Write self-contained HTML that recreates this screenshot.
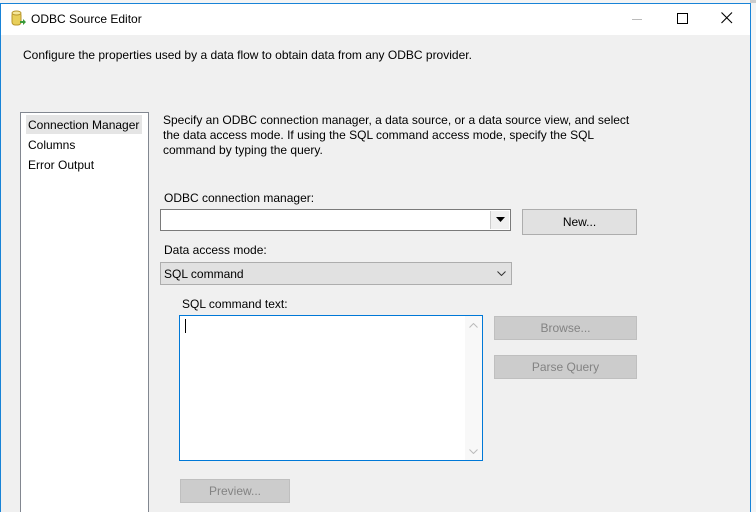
<!DOCTYPE html>
<html style="width:756px;height:512px;overflow:hidden"><head><style>
body{margin:0;width:756px;height:512px;overflow:hidden;background:#f4f4f4;font-family:"Liberation Sans",sans-serif;font-size:12px;color:#000;position:relative}
.a{position:absolute}
.win{left:0;top:3px;width:749px;height:509px;border:1px solid #1883d7;border-bottom:none;background:#f0f0f0;overflow:hidden}
.title{left:0;top:0;width:749px;height:31px;background:#fff}
.btn{background:#e1e1e1;border:1px solid #adadad;box-sizing:border-box;text-align:center;line-height:23px}
.dis{background:#cccccc;border:1px solid #bfbfbf;color:#838383}
</style></head><body>
<div class="a" style="left:750px;top:0;width:6px;height:3px;background:#ccc"></div>
<div class="a win">
 <div class="a title">
  <svg class="a" style="left:10px;top:6px" width="16" height="18"><rect x="1" y="2" width="9" height="13" rx="3" fill="#e8cf5a" stroke="#b8962a"/><ellipse cx="5.5" cy="3" rx="4.5" ry="2" fill="#f5e79a" stroke="#b8962a"/><path d="M9 11h3v-2l3 3-3 3v-2H9z" fill="#3a9a3a"/></svg>
  <div class="a" style="left:30px;top:8px;font-size:12px">ODBC Source Editor</div>
  <div class="a" style="left:631px;top:15px;width:10px;height:1px;background:#bbb"></div>
  <div class="a" style="left:676px;top:9px;width:9px;height:9px;border:1px solid #000"></div>
  <svg class="a" style="left:720px;top:8px" width="12" height="12"><path d="M0.5 0.5L11 11M11 0.5L0.5 11" stroke="#000" stroke-width="1.1"/></svg>
 </div>
 <div class="a" style="left:22px;top:44px">Configure the properties used by a data flow to obtain data from any ODBC provider.</div>
 <div class="a" style="left:19px;top:108px;width:127px;height:420px;background:#fff;border:1px solid #828790">
  <div class="a" style="left:5px;top:2px;width:116px;height:19px;background:#e5e5e5"></div>
  <div class="a" style="left:7px;top:5px">Connection Manager</div>
  <div class="a" style="left:7px;top:25px">Columns</div>
  <div class="a" style="left:7px;top:45px">Error Output</div>
 </div>
 <div class="a" style="left:162px;top:109px;line-height:15px;width:470px">Specify an ODBC connection manager, a data source, or a data source view, and select the data access mode. If using the SQL command access mode, specify the SQL command by typing the query.</div>
 <div class="a" style="left:163px;top:187px">ODBC connection manager:</div>
 <div class="a" style="left:159px;top:205px;width:349px;height:20px;background:#fff;border:1px solid #7a7a7a">
  <div class="a" style="right:1px;top:1px;width:18px;height:18px;background:#f0f0f0;border-left:1px solid #ccc"></div>
  <svg class="a" style="right:5px;top:7px" width="9" height="5"><path d="M0 0h9L4.5 5z"/></svg>
 </div>
 <div class="a btn" style="left:521px;top:205px;width:115px;height:26px;line-height:24px">New...</div>
 <div class="a" style="left:163px;top:239px">Data access mode:</div>
 <div class="a" style="left:159px;top:258px;width:350px;height:21px;background:#e1e1e1;border:1px solid #adadad">
  <div class="a" style="left:3px;top:4px">SQL command</div>
  <svg class="a" style="right:5px;top:8px" width="9" height="5"><path d="M0.5 0.5L4.5 4.5L8.5 0.5" stroke="#333" fill="none"/></svg>
 </div>
 <div class="a" style="left:181px;top:293px">SQL command text:</div>
 <div class="a" style="left:178px;top:311px;width:302px;height:144px;background:#fff;border:1px solid #0078d7">
  <div class="a" style="left:5px;top:3px;width:1px;height:14px;background:#000"></div>
  <div class="a" style="right:0;top:0;width:17px;height:144px;background:#f8f8f8"></div>
  <svg class="a" style="right:4px;top:7px" width="9" height="5"><path d="M0.5 4.5L4.5 0.5L8.5 4.5" stroke="#bbb" fill="none"/></svg>
  <svg class="a" style="right:4px;top:133px" width="9" height="5"><path d="M0.5 0.5L4.5 4.5L8.5 0.5" stroke="#bbb" fill="none"/></svg>
 </div>
 <div class="a btn dis" style="left:493px;top:312px;width:143px;height:24px">Browse...</div>
 <div class="a btn dis" style="left:493px;top:351px;width:143px;height:24px">Parse Query</div>
 <div class="a btn dis" style="left:179px;top:475px;width:110px;height:24px">Preview...</div>
</div>
</body></html>
